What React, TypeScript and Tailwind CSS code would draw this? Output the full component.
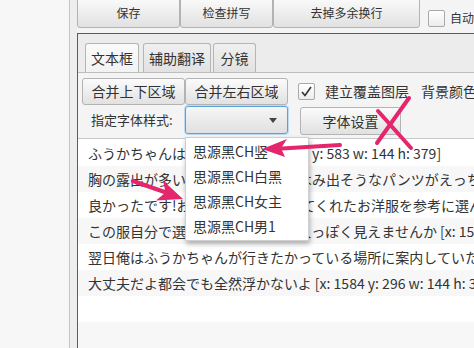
const rows = [
  'ふうかちゃんはかわいいね [x: 1660 y: 583 w: 144 h: 379]',
  '胸の露出が多いし、スカートからはみ出そうなパンツがえっち',
  '良かったです!お母さんが買ってきてくれたお洋服を参考に選んだんです',
  'この服自分で選んだんだけど、大人っぽく見えませんか [x: 1584 y: 120 w: 144 h: 379]',
  '翌日俺はふうかちゃんが行きたかっている場所に案内していた',
  '大丈夫だよ都会でも全然浮かないよ [x: 1584 y: 296 w: 144 h: 379]',
  '',
  '',
];

const fonts = ['思源黑CH竖', '思源黑CH白黑', '思源黑CH女主', '思源黑CH男1'];

function Btn({ label, w, h = 'h-[27px]', text = 'text-[14px]' }: { label: string; w: string; h?: string; text?: string }) {
  return (
    <div
      className={`${w} ${h} ${text} shrink-0 flex items-center justify-center rounded-[3px] border border-[#b3b3b3] bg-linear-to-b from-[#fbfbfb] to-[#e1e1e1] text-[#333]`}
    >
      {label}
    </div>
  );
}

function Check({ checked }: { checked?: boolean }) {
  return (
    <div className="w-[17px] h-[17px] shrink-0 rounded-[2px] border border-[#a9a9a9] bg-linear-to-b from-[#ffffff] to-[#ececec] flex items-center justify-center">
      {checked && (
        <svg width="13" height="13" viewBox="0 0 13 13">
          <path d="M2 7 L5 10.5 L11 2" fill="none" stroke="#333" strokeWidth="1.6" />
        </svg>
      )}
    </div>
  );
}

export default function App() {
  return (
    <div className="relative w-[474px] h-[348px] overflow-hidden bg-[#f4f4f4] flex font-['Noto_Sans_CJK_SC',sans-serif] text-[#333] whitespace-nowrap">
      <div className="w-[70px] h-full shrink-0 bg-[#f7f7f7] border-r border-[#c6c6c6]" />
      <div className="w-[7px] h-full shrink-0 bg-[#eeeeee]" />
      <div className="flex-1 min-w-0 flex flex-col">
        {/* toolbar */}
        <div className="h-[33px] shrink-0 flex items-start">
          <div className="flex mt-[-3px]">
            <Btn label="保存" w="w-[103px]" h="h-[31px]" text="text-[12px]" />
            <Btn label="检查拼写" w="w-[93px]" h="h-[31px]" text="text-[12px]" />
            <Btn label="去掉多余换行" w="w-[147px]" h="h-[31px]" text="text-[12px]" />
          </div>
          <div className="flex items-center gap-[5px] ml-[8px] mt-[9px] text-[12px]">
            <Check />
            <span>自动换行</span>
          </div>
        </div>

        {/* tab pane */}
        <div className="flex-1 min-h-0 flex flex-col border-l border-t border-[#5c5c5c]">
          <div className="h-[39px] shrink-0 flex items-end pl-[7px] bg-[#ececec] border-b border-[#bdbdbd] text-[14px]">
            <div className="w-[54px] h-[29px] flex items-center justify-center rounded-t-[3px] border border-b-0 border-[#b5b5b5] bg-linear-to-b from-[#fafafa] to-[#f2f2f2]">
              文本框
            </div>
            <div className="w-[68px] h-[29px] ml-[4px] flex items-center justify-center rounded-t-[3px] border border-b-0 border-[#b5b5b5] bg-linear-to-b from-[#f0f0f0] to-[#e2e2e2]">
              辅助翻译
            </div>
            <div className="w-[43px] h-[29px] ml-[2px] flex items-center justify-center rounded-t-[3px] border border-b-0 border-[#b5b5b5] bg-linear-to-b from-[#f0f0f0] to-[#e2e2e2]">
              分镜
            </div>
          </div>

          {/* controls */}
          <div className="flex items-center pl-[4px] pt-[5px] h-[32px] shrink-0 text-[14px]">
            <Btn label="合并上下区域" w="w-[103px]" />
            <Btn label="合并左右区域" w="w-[103px]" />
            <div className="ml-[10px]">
              <Check checked />
            </div>
            <span className="ml-[10px]">建立覆盖图层</span>
            <span className="ml-[12px]">背景颜色</span>
          </div>
          <div className="flex items-center h-[30px] shrink-0 pl-[13px]">
            <span className="w-[94px] text-[13px]">指定字体样式:</span>
            <div className="w-[103px] h-[28px] rounded-[3px] border border-[#5aa0dc] bg-linear-to-b from-[#f6f6f6] to-[#e0e0e0] flex items-center justify-end pr-[10px] shadow-[0_0_0_1px_#bcdaf3]">
              <svg width="8" height="5" viewBox="0 0 8 5">
                <path d="M0 0 H8 L4 5 Z" fill="#444" />
              </svg>
            </div>
            <div className="ml-[12px] mt-[2px]">
              <Btn label="字体设置" w="w-[101px]" h="h-[28px]" />
            </div>
          </div>

          {/* list */}
          <div className="mt-[3px] flex-1 min-h-0 border-t border-[#c8c8c8] pt-[1px] bg-white overflow-hidden font-['Noto_Sans_CJK_JP',sans-serif] text-[14px]">
            {rows.map((r, i) => (
              <div
                key={i}
                className={`h-[26px] flex items-center pl-[10px] ${i % 2 === 1 ? 'bg-[#f7f7f7]' : 'bg-white'}`}
              >
                {r}
              </div>
            ))}
          </div>
        </div>
      </div>

      {/* combo popup */}
      <div className="absolute left-[185px] top-[137px] w-[124px] py-[1px] bg-white border border-[#cfcfcf] shadow-[1px_3px_5px_rgba(0,0,0,0.3)] text-[14px]">
        {fonts.map((f) => (
          <div key={f} className="h-[25px] flex items-center pl-[7px]">
            {f}
          </div>
        ))}
      </div>

      {/* annotations */}
      <svg className="absolute inset-0 pointer-events-none" width="474" height="348" viewBox="0 0 474 348">
        <g fill="#e5266d" stroke="#e5266d" strokeLinecap="round">
          <line x1="340" y1="145" x2="282" y2="148.5" strokeWidth="4" />
          <polygon points="262,149 287,139 281,148.3 285,157" stroke="none" />
          <line x1="133" y1="181" x2="166" y2="192.5" strokeWidth="4.5" />
          <polygon points="183,199 163,180.5 165.5,192.5 156,200.5" stroke="none" />
          <line x1="378" y1="111" x2="411" y2="148" strokeWidth="4" fill="none" />
          <line x1="409" y1="98" x2="377" y2="143" strokeWidth="4" fill="none" />
        </g>
      </svg>
    </div>
  );
}
